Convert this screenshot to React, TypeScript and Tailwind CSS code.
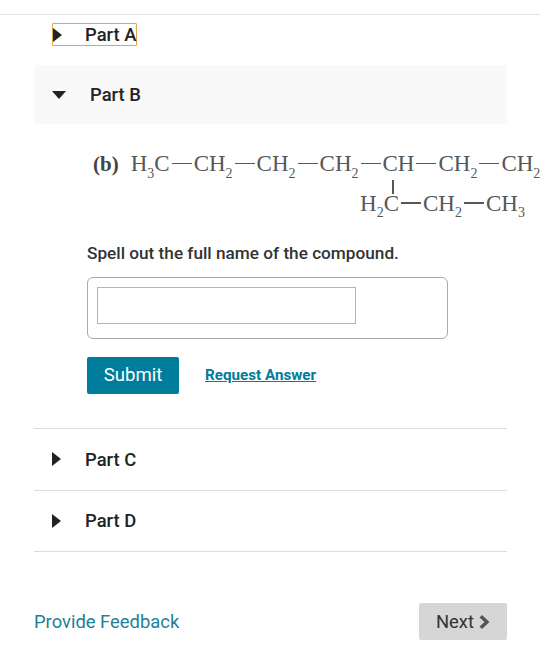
function RightArrow() {
  return (
    <svg width="9" height="14" viewBox="0 0 9 14" className="shrink-0">
      <path d="M0 0 L9 7 L0 14 Z" fill="#222222" />
    </svg>
  );
}

function DownArrow() {
  return (
    <svg width="14" height="8" viewBox="0 0 14 8" className="shrink-0">
      <path d="M0 0 H14 L7 8 Z" fill="#222222" />
    </svg>
  );
}

function Sub({ n }: { n: number }) {
  return <sub className="relative top-[1px] align-sub text-[14px] leading-none">{n}</sub>;
}

function Bond() {
  return <span className="mx-[2px] inline-block h-[1.5px] w-[20px] translate-y-[-7px] bg-[#55585a] align-baseline" />;
}

function CollapsedPart({ label }: { label: string }) {
  return (
    <div className="flex h-[61.5px] items-center gap-[24px] border-b border-[#dddddd] pl-[18px] text-[18.4px] font-medium text-[#222222]">
      <RightArrow />
      <span>{label}</span>
    </div>
  );
}

export default function App() {
  return (
    <div className="h-[647px] w-[540px] overflow-hidden bg-white font-['Roboto',sans-serif] text-[#222222]">
      <div className="mt-[14px] h-px bg-[#e2e2e2]" />

      <div className="mx-[34px] w-[473px]">
        {/* Part A has the focus ring */}
        <div className="mt-[8px] ml-[18px] flex h-[23px] w-[85px] items-center gap-[23px] rounded-[1px] border border-[#e0a93f] text-[18.4px] font-medium">
          <RightArrow />
          <span className="whitespace-nowrap">Part A</span>
        </div>

        <div className="mt-[19px] flex h-[59px] items-center gap-[24px] bg-[#f9f9f9] pl-[18px] text-[18.4px] font-medium">
          <DownArrow />
          <span className="pt-px">Part B</span>
        </div>

        <div className="pl-[53px]">
          {/* Formula */}
          <div className="mt-[26px] ml-[6px] w-[460px] whitespace-nowrap font-['Liberation_Serif',serif] text-[23px] leading-[28px] text-[#55585a]">
            <div>
              <b className="mr-[12px] text-[21px] text-[#444444]">(b)</b>
              H<Sub n={3} />C<Bond />CH<Sub n={2} /><Bond />CH<Sub n={2} /><Bond />CH<Sub n={2} /><Bond />CH<Bond />CH<Sub n={2} /><Bond />CH<Sub n={2} />
            </div>
            <div className="ml-[299px] h-[14px] w-[1.5px] bg-[#55585a]" />
            <div className="-mt-[4px] ml-[267px]">
              H<Sub n={2} />C<Bond />CH<Sub n={2} /><Bond />CH<Sub n={3} />
            </div>
          </div>

          <p className="mt-[22px] text-[17.2px] font-medium leading-[24px] text-[#333333]">
            Spell out the full name of the compound.
          </p>

          <div className="mt-[12px] h-[62px] w-[361px] rounded-[6px] border border-[#aaaaaa] pl-[9px] pt-[9px]">
            <div className="h-[37px] w-[259px] border border-[#b5b5b5]" />
          </div>

          <div className="mt-[18px] flex items-center gap-[26px]">
            <button className="h-[37px] w-[92px] rounded-[2px] bg-[#007c9c] text-[18.6px] text-white">Submit</button>
            <a className="text-[15.2px] font-bold text-[#007c9c] underline">Request Answer</a>
          </div>
        </div>

        <div className="mt-[34px] border-b border-[#dddddd]" />
        <CollapsedPart label="Part C" />
        <CollapsedPart label="Part D" />

        <div className="mt-[51px] flex items-center justify-between">
          <a className="text-[18.4px] text-[#1f7f99]">Provide Feedback</a>
          <button className="flex h-[37px] w-[88px] items-center justify-center gap-[5px] rounded-[2px] bg-[#d6d6d6] text-[18.4px] text-[#333333]">
            Next
            <svg width="11" height="14" viewBox="0 0 11 14" className="shrink-0">
              <path d="M3 0 L10.5 7 L3 14 L0.5 11.5 L5.5 7 L0.5 2.5 Z" fill="#555555" />
            </svg>
          </button>
        </div>
      </div>
    </div>
  );
}
